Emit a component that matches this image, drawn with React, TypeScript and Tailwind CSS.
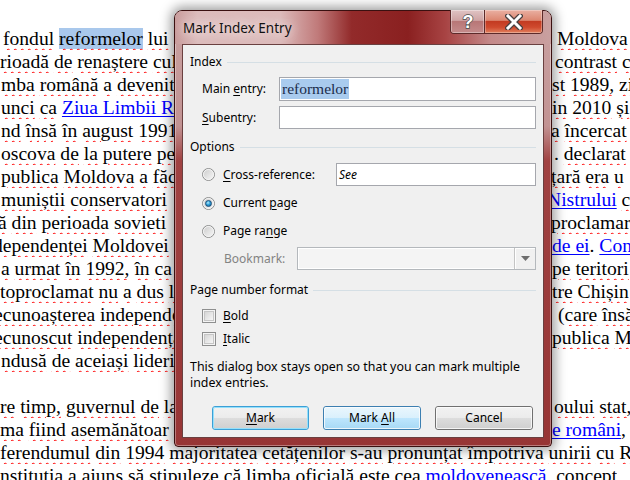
import React from "react";

type Seg = [string, "s" | "p" | "l" | "h"];

const SQ =
  "underline decoration-wavy decoration-[#ff0000] decoration-1 underline-offset-[3px]";

function Frag({ segs }: { segs: Seg[] }) {
  return (
    <>
      {segs.map(([t, k], i) => {
        if (k === "p") return <span key={i}>{t}</span>;
        if (k === "l")
          return (
            <span key={i} className="text-[#0000ff] underline decoration-[#0000ff] decoration-1 underline-offset-[2px]">
              {t}
            </span>
          );
        if (k === "h")
          return (
            <span key={i} className={"bg-[#a9c8ec] " + SQ}>
              {t}
            </span>
          );
        return (
          <span key={i}>
            {t.split(/(\s+)/).map((w, j) =>
              /^\s+$/.test(w) || w === "" ? (
                <span key={j}>{w}</span>
              ) : (
                <span key={j} className={SQ}>
                  {w}
                </span>
              )
            )}
          </span>
        );
      })}
    </>
  );
}

type Row = { l: Seg[]; r?: Seg[]; lc?: string; rc?: string; full?: boolean };

const rows: Row[] = [
  { l: [["fondul ", "s"], ["reformelor", "h"], [" lui", "s"]], lc: "pl-[3px]", r: [["Moldova", "s"]], rc: "pl-[6px]" },
  { l: [["rioadă de renaștere cul", "s"]], r: [["contrast c", "s"]], rc: "pl-[4px]" },
  { l: [["mba română a devenit l", "s"]], lc: "pl-[1px]", r: [["st 1989, zi", "s"]], rc: "pl-[1px]" },
  { l: [["unci ca ", "s"], ["Ziua Limbii Ro", "l"]], lc: "pl-[1px]", r: [["in 2010 și", "s"]], rc: "pl-[1px]" },
  { l: [["nd însă în august 1991", "s"]], lc: "pl-[1px]", r: [["a încercat s", "s"]], rc: "pl-[0px]" },
  { l: [["oscova de la putere pe", "s"]], lc: "pl-[1px]", r: [[". ", "p"], ["declarat i", "s"]], rc: "pl-[3px]" },
  { l: [["publica Moldova a făc", "s"]], lc: "pl-[1px]", r: [["țară era u", "s"]], rc: "pl-[0px]" },
  { l: [["muniștii conservatori", "s"]], lc: "pl-[1px]", r: [["Nistrului", "l"], [" ce", "s"]], rc: "ml-[-4px]" },
  { l: [["ă din perioada sovieti", "s"]], lc: "ml-[-2px]", r: [["proclamare", "s"]], rc: "pl-[0px]" },
  { l: [["dependenței Moldovei", "s"]], lc: "ml-[-7px]", r: [["de ei", "l"], [". ", "p"], ["Con", "l"]], rc: "pl-[1px]" },
  { l: [["a urmat în 1992, în ca", "s"]], lc: "pl-[1px]", r: [["pe teritori", "s"]], rc: "pl-[1px]" },
  { l: [["toproclamat nu a dus l", "s"]], lc: "pl-[0px]", r: [["tre Chișin", "s"]], rc: "pl-[1px]" },
  { l: [["ecunoașterea independe", "s"]], lc: "ml-[-6px]", r: [["(care însă", "s"]], rc: "pl-[7px]" },
  { l: [["ecunoscut independența", "s"]], lc: "ml-[-6px]", r: [["publica M", "s"]], rc: "pl-[1px]" },
  { l: [["ndusă de aceiași lideri", "s"]], lc: "pl-[1px]" },
  { l: [["", "p"]] },
  { l: [["re timp, guvernul de la", "s"]], r: [["oului stat,", "s"]], rc: "pl-[3px]" },
  { l: [["ma fiind asemănătoar", "s"]], r: [["e români", "l"], [", c", "p"]], rc: "pl-[1px]" },
  { l: [["ferendumul din 1994 majoritatea cetățenilor s-au pronunțat împotriva unirii cu R", "s"]], full: true },
  {
    l: [
      ["nstituția a ajuns să stipuleze că limba oficială este cea ", "s"],
      ["moldovenească", "l"],
      [", concept", "s"],
    ],
    full: true,
  },
];

function Doc() {
  return (
    <div className="pt-[27px] font-['Liberation_Serif',serif] text-[19.6px] leading-[23px] text-black">
      {rows.map((r, i) => (
        <div key={i} className="flex h-[23px] whitespace-nowrap">
          {r.full ? (
            <div className="overflow-hidden">
              <Frag segs={r.l} />
            </div>
          ) : (
            <>
              <div className="w-[551px] shrink-0 overflow-hidden">
                <div className={r.lc ?? ""}>
                  <Frag segs={r.l} />
                </div>
              </div>
              <div className="flex-1 overflow-hidden">
                <div className={r.rc ?? ""}>{r.r && <Frag segs={r.r} />}</div>
              </div>
            </>
          )}
        </div>
      ))}
    </div>
  );
}

function Header({ text }: { text: string }) {
  return (
    <div className="flex items-center h-[16px] gap-[5px]">
      <span>{text}</span>
      <div className="flex-1 h-px bg-[#d5dfe5]" />
    </div>
  );
}

function Radio({ on }: { on?: boolean }) {
  return (
    <div className="w-[13px] h-[13px] shrink-0 rounded-full border border-[#8e8f8f] bg-[linear-gradient(135deg,#d8d8d8,#f8f8f8)] flex items-center justify-center">
      <div className="w-[11px] h-[11px] rounded-full border border-[#f4f4f4] bg-[linear-gradient(135deg,#cfcfcf,#f4f4f4)] flex items-center justify-center">
        {on && (
          <div className="w-[7px] h-[7px] rounded-full bg-[radial-gradient(circle_at_40%_35%,#b5ecff_0%,#2fa0d8_45%,#0d5a92_100%)] border border-[#1b4f7a]" />
        )}
      </div>
    </div>
  );
}

function Check() {
  return (
    <div className="w-[14px] h-[14px] shrink-0 border border-[#8e8f8f] bg-[#f4f4f4] p-[1px]">
      <div className="w-full h-full border border-[#c6c6c6] bg-[linear-gradient(135deg,#d6d6d6,#f6f6f6)]" />
    </div>
  );
}

function U({ children }: { children: React.ReactNode }) {
  return <span className="underline underline-offset-[2px] decoration-1">{children}</span>;
}

function Btn({
  children,
  kind,
  w,
}: {
  children: React.ReactNode;
  kind: "def" | "hover" | "norm";
  w: string;
}) {
  const outer =
    kind === "norm"
      ? "border-[#707070]"
      : kind === "def"
      ? "border-[#3c9fd6]"
      : "border-[#3c7fb1]";
  const bg =
    kind === "hover"
      ? "bg-[linear-gradient(to_bottom,#eaf6fd_0%,#d9f0fc_50%,#bee6fd_50%,#a7d9f5_100%)]"
      : "bg-[linear-gradient(to_bottom,#f2f2f2_0%,#ebebeb_50%,#dddddd_50%,#cfcfcf_100%)]";
  const inner = kind === "def" ? "border-[#94e0fb]" : "border-[#fcfcfc]/80";
  return (
    <div className={w + " h-[24px] rounded-[3px] border " + outer + " " + bg}>
      <div className={"w-full h-full rounded-[2px] border " + inner + " flex items-center justify-center"}>
        {children}
      </div>
    </div>
  );
}

function Dialog() {
  return (
    <div className="absolute left-[174px] top-[10px] w-[378px] h-[437px] rounded-t-[8px] rounded-b-[4px] border border-[#3a1010] shadow-[0_0_12px_3px_rgba(0,0,0,0.4),inset_0_0_0_1px_rgba(255,255,255,0.35)] bg-[linear-gradient(to_bottom,#c9a2a2_0px,#c29393_115px,#a04242_150px,#973535_100%)] flex flex-col font-['Noto_Sans',sans-serif]">
      <div className="h-[33px] shrink-0 flex rounded-t-[7px] bg-[linear-gradient(to_right,#c99c9c_0%,#dcbcbc_6%,#dcbaba_28%,#c07a7a_38%,#922a2a_47%,#8a2020_62%,#a84444_72%,#c48a8a_84%,#c9a0a0_100%)]">
        <div className="flex-1 pl-[8px] pt-[7px] text-[13.5px] leading-[20px] text-[#111] [text-shadow:0_0_8px_#f2e4e4,0_0_12px_#f2e4e4]">
          Mark Index Entry
        </div>
        <div className="flex self-start mr-[8px] h-[24px] mt-[-1px] rounded-b-[4px] border border-[#5c2a2a] border-t-0 overflow-hidden">
          <div className="w-[34px] h-full border-r border-[#5c2a2a] bg-[linear-gradient(to_bottom,#e0c4c4_0%,#cfa4a4_45%,#b87777_50%,#c58c8c_100%)] shadow-[inset_0_0_0_1px_rgba(255,255,255,0.35)] flex items-center justify-center">
            <svg width="14" height="20" viewBox="0 0 14 20">
              <text
                x="7"
                y="16"
                textAnchor="middle"
                fontFamily="Liberation Sans, sans-serif"
                fontWeight="bold"
                fontSize="18"
                fill="#ffffff"
                stroke="#4a4a4a"
                strokeWidth="1.4"
                paintOrder="stroke"
              >
                ?
              </text>
            </svg>
          </div>
          <div className="w-[57px] h-full bg-[linear-gradient(to_bottom,#eab0a2_0%,#dc8670_45%,#c33b22_50%,#cf4a2e_75%,#e2805e_100%)] shadow-[inset_0_0_0_1px_rgba(255,255,255,0.3)] flex items-center justify-center">
            <svg width="18" height="16" viewBox="0 0 18 16">
              <path d="M3 2 L15 14 M15 2 L3 14" stroke="#4a4040" strokeWidth="5.5" strokeLinecap="square" />
              <path d="M3 2 L15 14 M15 2 L3 14" stroke="#ffffff" strokeWidth="3" strokeLinecap="square" />
            </svg>
          </div>
        </div>
      </div>
      <div className="mx-[7px] mb-[8px] flex-1 min-h-0 overflow-hidden border border-[#6a4040] bg-[#f0f0f0] flex flex-col pl-[7px] pr-[7px] text-[12px] leading-[16px] text-black">
        <div className="mt-[9px]">
          <Header text="Index" />
        </div>
        <div className="mt-[7px] h-[24px] flex items-center">
          <div className="w-[89px] pl-[12px] shrink-0">
            Main <U>e</U>ntry:
          </div>
          <div className="flex-1 h-full border border-[#a5a7ad] bg-white p-[1px] flex items-stretch">
            <span className="bg-[#a9cbee] px-[1px] font-['Liberation_Serif',serif] text-[15.5px] leading-[20px] text-[#1b2b4b]">
              reformelor
            </span>
          </div>
        </div>
        <div className="mt-[5px] h-[23px] flex items-center">
          <div className="w-[89px] pl-[12px] shrink-0">
            <U>S</U>ubentry:
          </div>
          <div className="flex-1 h-full border border-[#a5a7ad] bg-white" />
        </div>
        <div className="mt-[10px]">
          <Header text="Options" />
        </div>
        <div className="mt-[8px] h-[23px] flex items-center">
          <div className="w-[146px] shrink-0 pl-[12px] flex items-center gap-[8px]">
            <Radio />
            <span>
              <U>C</U>ross-reference:
            </span>
          </div>
          <div className="flex-1 h-full border border-[#a5a7ad] bg-white flex items-center pl-[2px] italic">
            See
          </div>
        </div>
        <div className="mt-[7px] h-[20px] flex items-center pl-[12px] gap-[8px]">
          <Radio on />
          <span>
            Current <U>p</U>age
          </span>
        </div>
        <div className="mt-[8px] h-[20px] flex items-center pl-[12px] gap-[8px]">
          <Radio />
          <span>
            Page ra<U>n</U>ge
          </span>
        </div>
        <div className="mt-[6px] h-[23px] flex items-center">
          <div className="w-[107px] pl-[34px] shrink-0 text-[#838383]">Bookmark:</div>
          <div className="flex-1 h-full border border-[#b4b8bc] bg-[#f4f4f4] flex">
            <div className="flex-1 border border-white border-r-0" />
            <div className="w-[21px] border-l border-[#c4c4c4] bg-[#f0f0f0] shadow-[inset_1px_1px_0_#ffffff] flex items-center justify-center">
              <svg width="9" height="5" viewBox="0 0 9 5">
                <path d="M0 0 H9 L4.5 5 Z" fill="#6d6d6d" />
              </svg>
            </div>
          </div>
        </div>
        <div className="mt-[12px]">
          <Header text="Page number format" />
        </div>
        <div className="mt-[8px] h-[20px] flex items-center pl-[12px] gap-[7px]">
          <Check />
          <span>
            <U>B</U>old
          </span>
        </div>
        <div className="mt-[3px] h-[20px] flex items-center pl-[12px] gap-[7px]">
          <Check />
          <span>
            <U>I</U>talic
          </span>
        </div>
        <div className="mt-[10px] text-[12.4px] leading-[16px] whitespace-nowrap">
          This dialog box stays open so that you can mark multiple
          <br />
          index entries.
        </div>
        <div className="mt-[15px] flex pl-[22px] gap-[14px]">
          <Btn kind="def" w="w-[97px]">
            <span>
              <U>M</U>ark
            </span>
          </Btn>
          <Btn kind="hover" w="w-[98px]">
            <span>
              Mark <U>A</U>ll
            </span>
          </Btn>
          <Btn kind="norm" w="w-[98px]">
            <span>Cancel</span>
          </Btn>
        </div>
      </div>
    </div>
  );
}

export default function App() {
  return (
    <div className="relative w-[630px] h-[480px] overflow-hidden bg-white">
      <Doc />
      <Dialog />
    </div>
  );
}
